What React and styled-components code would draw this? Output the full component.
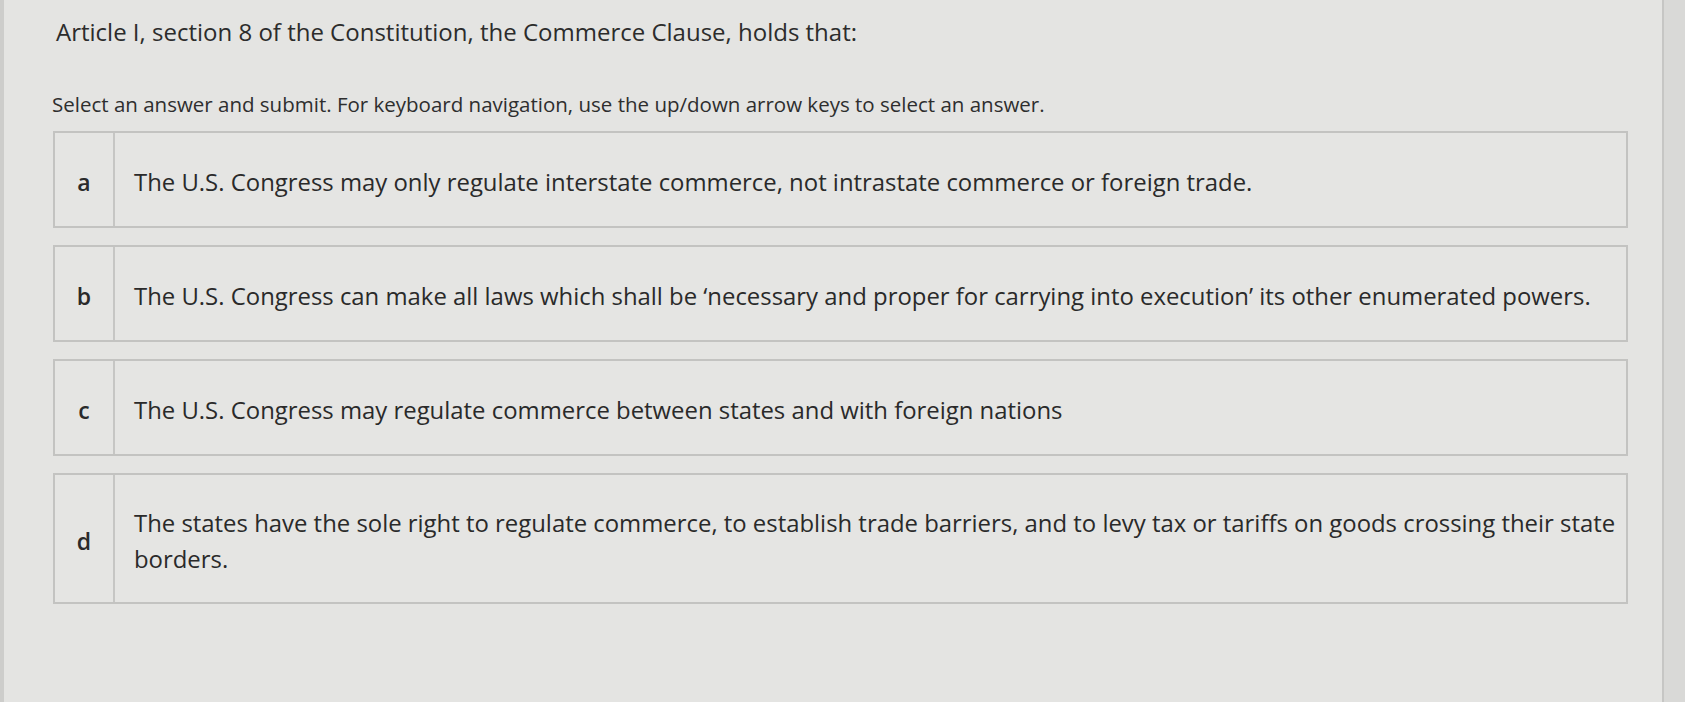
import React from "react";
import styled, { createGlobalStyle } from "styled-components";

const Global = createGlobalStyle`
  html, body { margin: 0; padding: 0; }
  body {
    background: #d9d9d7;
    font-family: "Open Sans", "Noto Sans", sans-serif;
    color: #2a2a2a;
  }
`;

const Screen = styled.div`
  display: flex;
  width: 1685px;
  height: 702px;
  overflow: hidden;
`;

const Page = styled.main`
  width: 1664px;
  background: #e4e4e2;
  border-left: 4px solid #cdcdcb;
  border-right: 2px solid #c6c6c4;
  padding: 14px 0 0 48px;
  box-sizing: border-box;
`;

const Title = styled.h1`
  margin: 0 0 0 4px;
  font-size: 24px;
  font-weight: 400;
  line-height: 36px;
  color: #2c2c2c;
`;

const Instructions = styled.p`
  margin: 40px 0 0 0;
  font-size: 20.5px;
  line-height: 28px;
  color: #2e2e2e;
`;

const OptionList = styled.ol`
  list-style: none;
  margin: 13px 0 0 1px;
  padding: 0;
  width: 1575px;
  display: flex;
  flex-direction: column;
  gap: 17px;
`;

const Option = styled.li`
  display: flex;
  min-height: ${(p) => (p.$tall ? 131 : 97)}px;
  border: 2px solid #c3c3c1;
  box-sizing: border-box;
  background: #e5e5e3;
`;

const Letter = styled.span`
  flex: 0 0 58px;
  display: flex;
  align-items: center;
  justify-content: center;
  border-right: 2px solid #c6c6c4;
  font-size: 23px;
  font-weight: 600;
  color: #2a2a2a;
  padding-top: 4px;
`;

const OptionText = styled.span`
  flex: 1;
  display: flex;
  align-items: center;
  padding: 4px 3px 0 19px;
  font-size: 23.9px;
  line-height: 36px;
  color: #2a2a2a;
`;

const options = [
  ["a", "The U.S. Congress may only regulate interstate commerce, not intrastate commerce or foreign trade."],
  ["b", "The U.S. Congress can make all laws which shall be \u2018necessary and proper for carrying into execution\u2019 its other enumerated powers."],
  ["c", "The U.S. Congress may regulate commerce between states and with foreign nations"],
  ["d", "The states have the sole right to regulate commerce, to establish trade barriers, and to levy tax or tariffs on goods crossing their state borders.", true],
];

export default function App() {
  return (
    <>
      <Global />
      <Screen>
        <Page>
          <Title>Article I, section 8 of the Constitution, the Commerce Clause, holds that:</Title>
          <Instructions>
            Select an answer and submit. For keyboard navigation, use the up/down arrow keys to select an answer.
          </Instructions>
          <OptionList>
            {options.map(([l, t, tall]) => (
              <Option key={l} $tall={tall}>
                <Letter>{l}</Letter>
                <OptionText>{t}</OptionText>
              </Option>
            ))}
          </OptionList>
        </Page>
      </Screen>
    </>
  );
}
